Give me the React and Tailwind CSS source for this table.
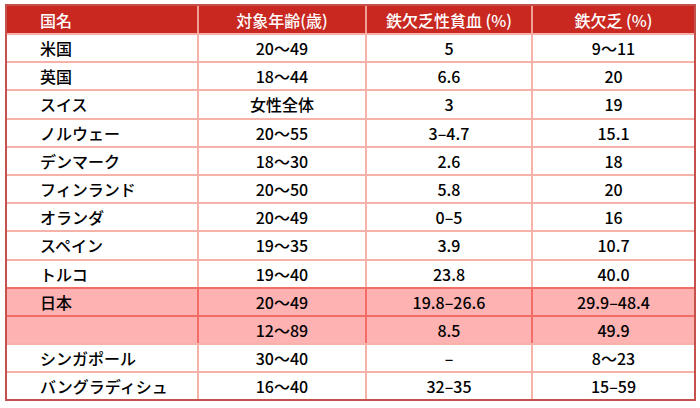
const rows = [
  ['米国', '20〜49', '5', '9〜11'],
  ['英国', '18〜44', '6.6', '20'],
  ['スイス', '女性全体', '3', '19'],
  ['ノルウェー', '20〜55', '3–4.7', '15.1'],
  ['デンマーク', '18〜30', '2.6', '18'],
  ['フィンランド', '20〜50', '5.8', '20'],
  ['オランダ', '20〜49', '0–5', '16'],
  ['スペイン', '19〜35', '3.9', '10.7'],
  ['トルコ', '19〜40', '23.8', '40.0'],
  ['日本', '20〜49', '19.8–26.6', '29.9–48.4', true],
  ['', '12〜89', '8.5', '49.9', true],
  ['シンガポール', '30〜40', '–', '8〜23'],
  ['バングラディシュ', '16〜40', '32–35', '15–59'],
]

export default function App() {
  return (
    <div className="w-[700px] h-[408px] bg-white pt-[4px] pl-[5px]" style={{ fontFamily: '"Noto Sans CJK JP", "Noto Sans", sans-serif' }}>
      <div className="w-[691px] border-2 border-[#c4514c] text-[16px] font-medium leading-none text-black">
        {/* header */}
        <div className="grid grid-cols-[190px_168px_166px_1fr] h-[27px] bg-[#c8281f] text-white">
          <div className="flex items-center pl-[33px]">国名</div>
          <div className="flex items-center justify-center border-l-2 border-[#f0a095]">対象年齢(歳)</div>
          <div className="flex items-center justify-center border-l-2 border-[#f0a095]">鉄欠乏性貧血 (%)</div>
          <div className="flex items-center justify-center border-l-2 border-[#f0a095]">鉄欠乏 (%)</div>
        </div>
        {rows.map(([name, age, anemia, def, hi], i) => (
          <div
            key={i}
            className={
              hi
                ? 'grid grid-cols-[190px_168px_166px_1fr] h-[28.2px] border-t-2 border-[#f36d66] bg-[#ffb2b2]'
                : 'grid grid-cols-[190px_168px_166px_1fr] h-[28.2px] border-t-2 border-[#f6b2a8] bg-white'
            }
          >
            <div className="flex items-center pl-[33px]">{name}</div>
            <div className={hi ? 'flex items-center justify-center border-l-2 border-[#f36d66]' : 'flex items-center justify-center border-l-2 border-[#f6b2a8]'}>{age}</div>
            <div className={hi ? 'flex items-center justify-center border-l-2 border-[#f36d66]' : 'flex items-center justify-center border-l-2 border-[#f6b2a8]'}>{anemia}</div>
            <div className={hi ? 'flex items-center justify-center border-l-2 border-[#f36d66]' : 'flex items-center justify-center border-l-2 border-[#f6b2a8]'}>{def}</div>
          </div>
        ))}
      </div>
    </div>
  )
}
